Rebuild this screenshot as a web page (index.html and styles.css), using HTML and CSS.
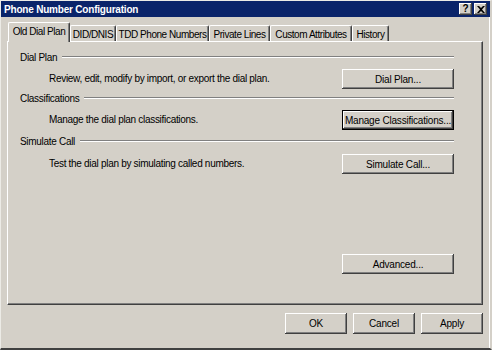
FILE: index.html
```html
<!DOCTYPE html>
<html>
<head>
<meta charset="utf-8">
<link rel="stylesheet" href="styles.css">
</head>
<body>
<div class="window">
  <div class="titlebar">
    <span class="title">Phone Number Configuration</span>
    <div class="caption-btns">
      <span class="cap-btn">?</span>
      <span class="cap-btn">
        <svg width="8" height="7" viewBox="0 0 8 7"><path d="M0 0h2l2 2 2-2h2L5 3.5 8 7H6L4 5 2 7H0l3-3.5z" fill="#000"/></svg>
      </span>
    </div>
  </div>
  <div class="client">
    <div class="tabs">
      <div class="tab active t1">Old Dial Plan</div>
      <div class="tab t2">DID/DNIS</div>
      <div class="tab t3">TDD Phone Numbers</div>
      <div class="tab t4">Private Lines</div>
      <div class="tab t5">Custom Attributes</div>
      <div class="tab t6">History</div>
    </div>
    <div class="panel">
      <div class="section">
        <div class="heading"><span>Dial Plan</span><span class="rule"></span></div>
        <div class="row"><span class="desc">Review, edit, modify by import, or export the dial plan.</span><button class="btn wide">Dial Plan...</button></div>
      </div>
      <div class="section">
        <div class="heading"><span>Classifications</span><span class="rule"></span></div>
        <div class="row"><span class="desc">Manage the dial plan classifications.</span><button class="btn wide default">Manage Classifications...</button></div>
      </div>
      <div class="section s3">
        <div class="heading"><span>Simulate Call</span><span class="rule"></span></div>
        <div class="row"><span class="desc">Test the dial plan by simulating called numbers.</span><button class="btn wide">Simulate Call...</button></div>
      </div>
      <div class="adv-row"><button class="btn wide">Advanced...</button></div>
    </div>
    <div class="footer">
      <button class="btn small">OK</button>
      <button class="btn small">Cancel</button>
      <button class="btn small">Apply</button>
    </div>
  </div>
</div>
</body>
</html>
```
FILE: styles.css
```css
* { box-sizing: border-box; }
html, body {
  margin: 0;
  padding: 0;
  width: 492px;
  height: 350px;
  overflow: hidden;
  background: #d4d0c8;
  font-family: "Liberation Sans", Arial, sans-serif;
  font-size: 10px;
  letter-spacing: -0.3px;
  color: #000;
}
.window {
  width: 492px;
  height: 350px;
  display: flex;
  flex-direction: column;
  border-left: 1px solid #ecebe6;
  border-top: 1px solid #ecebe6;
  border-right: 2px solid #d4d0c8;
  border-bottom: 2px solid #404040;
  box-shadow: inset -1px 0 #ffffff;
}
.titlebar {
  height: 16px;
  background: #0a246a;
  display: flex;
  align-items: center;
  justify-content: space-between;
  padding: 0 3px 0 3px;
  flex-shrink: 0;
}
.title {
  color: #fff;
  font-weight: bold;
  font-size: 10px;
  letter-spacing: -0.2px;
}
.caption-btns {
  display: flex;
  gap: 2px;
}
.cap-btn {
  width: 13px;
  height: 12px;
  background: #d4d0c8;
  box-shadow: inset -1px -1px #404040, inset 1px 1px #fff, inset -2px -2px #808080;
  display: flex;
  align-items: center;
  justify-content: center;
  font-weight: bold;
  font-size: 10px;
  line-height: 1;
  letter-spacing: 0;
}
.client {
  flex: 1;
  display: flex;
  flex-direction: column;
  padding: 5px 6px 0 6px;
}
.tabs {
  display: flex;
  align-items: flex-end;
  height: 19px;
  padding-left: 1px;
}
.tab {
  height: 16px;
  padding: 1px 0 0 0;
  display: flex;
  align-items: center;
  justify-content: center;
  border-top: 1px solid #fff;
  border-left: 1px solid #fff;
  border-right: 1px solid #404040;
  box-shadow: inset -1px 0 #808080;
  border-radius: 2px 2px 0 0;
  white-space: nowrap;
  flex-shrink: 0;
  letter-spacing: -0.45px;
}
.tab.active {
  height: 20px;
  margin-bottom: -1px;
  padding: 0 0 2px 0;
  background: #d4d0c8;
  position: relative;
  z-index: 1;
}
.t1 { width: 62px; }
.t2 { width: 46px; }
.t3 { width: 93px; }
.t4 { width: 61px; }
.t5 { width: 82px; }
.t6 { width: 37px; }
.panel {
  width: 476px;
  height: 264px;
  border-top: 1px solid #fff;
  border-left: 1px solid #fff;
  border-right: 1px solid #404040;
  border-bottom: 1px solid #404040;
  box-shadow: inset -1px -1px #808080;
  display: flex;
  flex-direction: column;
  padding: 9px 28px 30px 12px;
}
.section { display: flex; flex-direction: column; }
.section + .section { margin-top: 3px; }
.section.s3 { margin-top: 5px; }
.heading {
  display: flex;
  align-items: center;
  height: 13px;
  gap: 5px;
}
.rule {
  flex: 1;
  height: 2px;
  border-top: 1px solid #808080;
  border-bottom: 1px solid #fff;
  margin-top: -2px;
}
.row {
  display: flex;
  align-items: center;
  justify-content: space-between;
  margin-top: 5px;
  padding-left: 29px;
}
.s3 .row { margin-top: 6px; }
.desc { margin-top: -2px; }
.btn {
  font-family: inherit;
  font-size: 10px;
  letter-spacing: -0.2px;
  color: #000;
  background: #d4d0c8;
  border: none;
  margin: 0;
  padding: 0;
  white-space: nowrap;
  box-shadow: inset -1px -1px #404040, inset 1px 1px #fff, inset -2px -2px #808080;
  display: flex;
  align-items: center;
  justify-content: center;
}
.btn.wide { width: 112px; height: 20px; }
.btn.default {
  border: 1px solid #000;
}
.adv-row {
  margin-top: auto;
  display: flex;
  justify-content: flex-end;
}
.footer {
  display: flex;
  justify-content: flex-end;
  gap: 6px;
  margin-top: 8px;
  padding-right: 1px;
}
.btn.small { width: 62px; height: 21px; }
```
